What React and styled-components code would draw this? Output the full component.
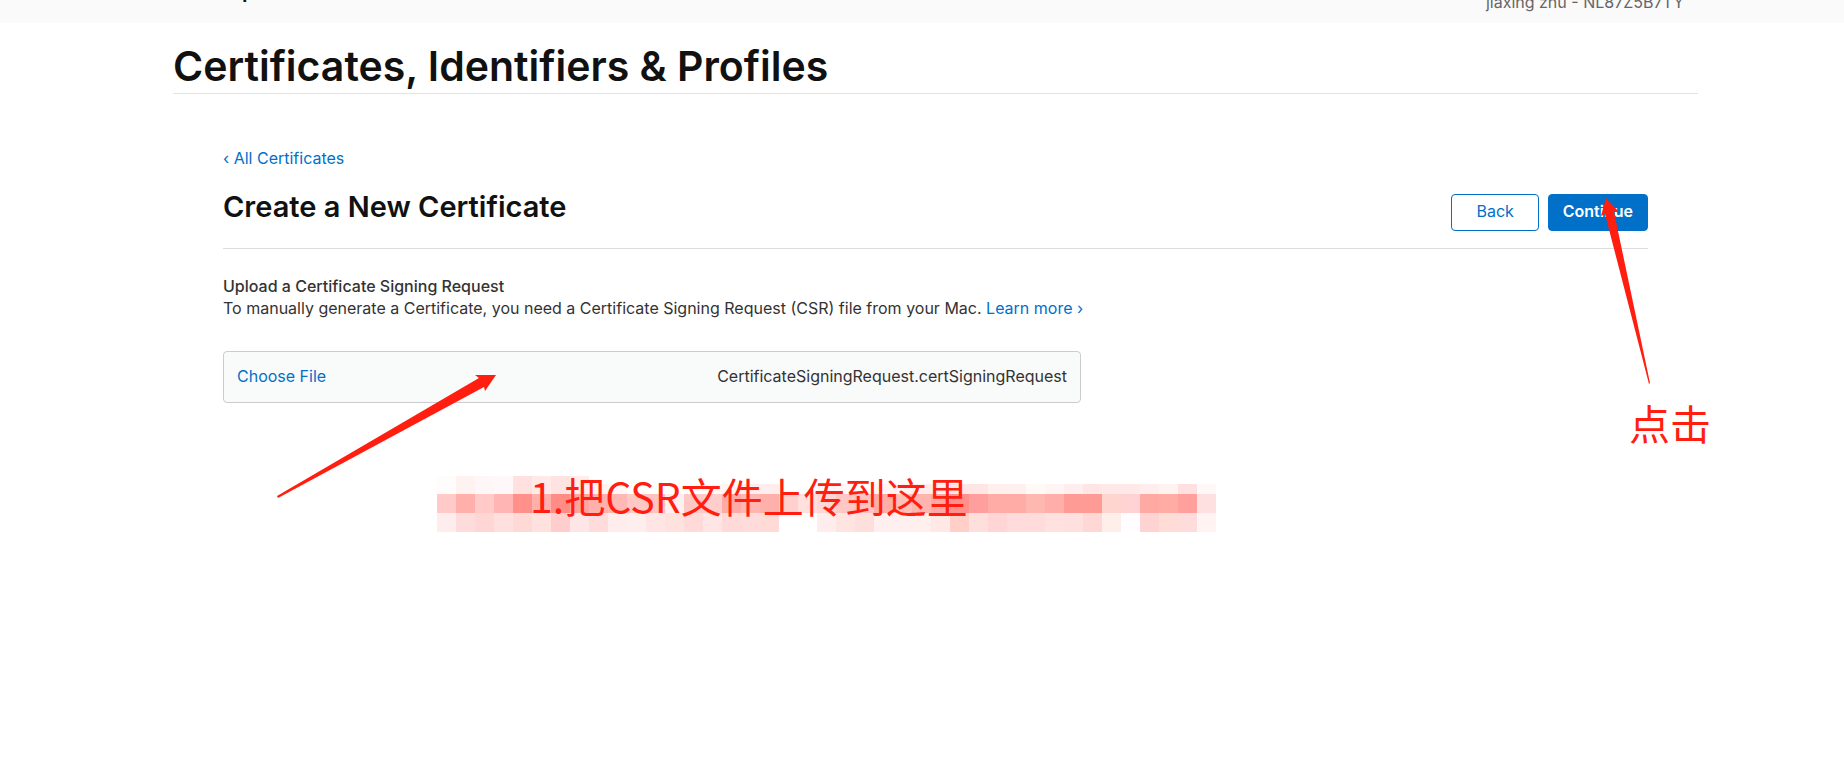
import React from 'react'
import styled, { createGlobalStyle } from 'styled-components'

const GlobalStyle = createGlobalStyle`
    * {
        box-sizing: border-box;
    }
    body {
        margin: 0;
        background: #fff;
        color: #333;
        font-family: Inter, "Noto Sans CJK SC", sans-serif;
        font-size: 16px;
        line-height: 22px;
    }
`;

const Page = styled.div`
    position: relative;
    min-height: 100vh;
`;

const TopBar = styled.header`
    display: flex;
    align-items: flex-end;
    justify-content: space-between;
    height: 23px;
    padding: 0 160px 10px 242px;
    overflow: hidden;
    background: #fafafa;
`;

const Brand = styled.span`
    margin-bottom: 11px;
    font-size: 21px;
    font-weight: 600;
    color: #111;
`;

const Account = styled.span`
    font-size: 16px;
    color: #666;
`;

const Main = styled.main`
    padding: 0 146px 0 173px;
`;

const PageTitle = styled.h1`
    margin: 0;
    padding: 19px 0 3px;
    border-bottom: 1px solid #e3e3e3;
    font-size: 41px;
    font-weight: 600;
    line-height: 48px;
    color: #111;
`;

const Content = styled.section`
    padding: 53px 50px 0;
`;

const Link = styled.a`
    color: #0070c9;
    text-decoration: none;
`;

const Heading = styled.div`
    display: flex;
    justify-content: space-between;
    align-items: flex-start;
    margin: 20px 0 26px;
    padding-bottom: 17px;
    border-bottom: 1px solid #ddd;
`;

const Subtitle = styled.h2`
    margin: 0;
    font-size: 29px;
    font-weight: 600;
    line-height: 36px;
    color: #111;
`;

const Buttons = styled.div`
    display: flex;
    gap: 9px;
    padding-top: 5px;
`;

const Button = styled.button`
    height: 37px;
    padding: 0 ${p => p.$primary ? `14px` : `24px`} 3px;
    border: 1px solid #0070c9;
    border-radius: 4px;
    background: ${p => p.$primary ? `#0070c9` : `#fff`};
    color: ${p => p.$primary ? `#fff` : `#0070c9`};
    font-family: inherit;
    font-size: 16px;
    font-weight: ${p => p.$primary ? 600 : 400};
    cursor: pointer;
`;

const Label = styled.h3`
    margin: 0;
    font-size: 16px;
    font-weight: 500;
    line-height: 22px;
`;

const Text = styled.p`
    margin: 0 0 32px;
`;

const FilePicker = styled.div`
    display: flex;
    justify-content: space-between;
    align-items: center;
    max-width: 858px;
    padding: 13px 13px 15px;
    border: 1px solid #ccc;
    border-radius: 4px;
    background: #f9fafa;
`;

const ChooseButton = styled.button`
    padding: 0;
    border: 0;
    background: none;
    color: #0070c9;
    font: inherit;
    cursor: pointer;
`;

const Marks = styled.svg`
    position: absolute;
    top: 0;
    left: 0;
    width: 100%;
    height: 100%;
    pointer-events: none;
`;

const Note = styled.div`
    position: absolute;
    top: ${p => p.$top}px;
    left: ${p => p.$left}px;
    color: #ff1e10;
    font-family: "Noto Sans CJK SC", sans-serif;
    font-size: 41px;
    font-weight: 400;
    line-height: 48px;
    white-space: nowrap;
`;

const CELL = 19

// one colour per mosaic cell, '-' leaves the cell empty
const mosaic = [
    {
        y: 476, height: 18, start: 0,
        cells: 'fffdfc fff3f2 fff7f7 fff8f8 ffe2e0 ffeae8 ffe3e2 ffeceb',
    },
    {
        y: 484, height: 10, start: 8,
        cells: 'fff4f2 fff8f7 - - - - fffaf9 fff4f4 ffecec ffecec - - fff5f5 fff8f8 - fff5f4 fff3f2 ffece9 fff0ee ffe5e5 ffe6e4 fff0ee fff0f0 fffaf6 fff5f4 ffeeee ffe6e5 ffe8e8 ffe8e8 ffeced fff3f1 ffe0e0 fff8f8',
    },
    {
        y: 494, height: 19, start: 0,
        cells: 'ffcac7 ffb0ab ffcac7 ffb5b4 ff918a ffb0ab ff8d86 ffa5a0 ffb0ab ffb8b4 ffc8c4 ffc4c2 fff0f0 ffc8c6 ffcecb ffaaa6 ffb5b2 ffb0aa ffd0ce ffe0de ffd8d6 ffc8c4 ffc4c2 ffada6 ffc0b8 ffb4b0 ffa8a4 ff908c ff9f9d ffaca6 ffaca6 ffb8b0 ffaea9 ff9b95 ff9b95 ffd5cf ffd2d3 ffa9a3 ffaca4 ffa09c ffe0e1',
    },
    {
        y: 513, height: 19, start: 0,
        cells: 'ffeded ffdcdc ffd6d3 ffe0de ffd9d6 ffe2e0 ffcdcc ffe6e6 ffdbdb ffecec ffeeee ffe6e5 ffe2de ffdad9 ffe6e4 ffdad9 ffdcdb ffdbd8 - - ffedee ffe4e1 ffdfdc fff0ef fff0ef ffefed ffe8e6 ffcfc8 ffdfdc ffd6d5 ffdcdb ffdcdb ffe2df ffe0de ffd8d6 ffefeb fffdff ffd3d1 ffdcd6 ffdcdc fff4f2',
    },
]

const Mosaic = () => mosaic.map(row => row.cells.split(' ').map((color, i) => color !== '-' && (
    <rect
        key={`${row.y}-${i}`}
        x={437 + (row.start + i) * CELL}
        y={row.y}
        width={CELL}
        height={row.height}
        fill={`#${color}`}
    />
)))

export default function App() {
    return (
        <Page>
            <GlobalStyle />
            <TopBar>
                <Brand>p</Brand>
                <Account>jiaxing zhu - NL87Z5B7TY</Account>
            </TopBar>
            <Main>
                <PageTitle>Certificates, Identifiers & Profiles</PageTitle>
                <Content>
                    <Link href="#certificates">‹ All Certificates</Link>
                    <Heading>
                        <Subtitle>Create a New Certificate</Subtitle>
                        <Buttons>
                            <Button type="button">Back</Button>
                            <Button type="button" $primary>Continue</Button>
                        </Buttons>
                    </Heading>
                    <Label>Upload a Certificate Signing Request</Label>
                    <Text>
                        To manually generate a Certificate, you need a Certificate Signing Request (CSR) file from your Mac.{' '}
                        <Link href="#learn-more">Learn more ›</Link>
                    </Text>
                    <FilePicker>
                        <ChooseButton type="button">Choose File</ChooseButton>
                        <span>CertificateSigningRequest.certSigningRequest</span>
                    </FilePicker>
                </Content>
            </Main>
            <Marks aria-hidden="true">
                <Mosaic />
                <path fill="#ff1e10" d="M277 496 L479 378 L475 375 L496 375 L485 391 L484 387 L278 498 Z" />
                <path fill="#ff1e10" d="M1606 198 L1619 212 L1614 212 L1650 383 L1649 384 L1605 214 L1601 216 Z" />
            </Marks>
            <Note $top={471} $left={530}>1.把CSR文件上传到这里</Note>
            <Note $top={398} $left={1629}>点击</Note>
        </Page>
    )
}
